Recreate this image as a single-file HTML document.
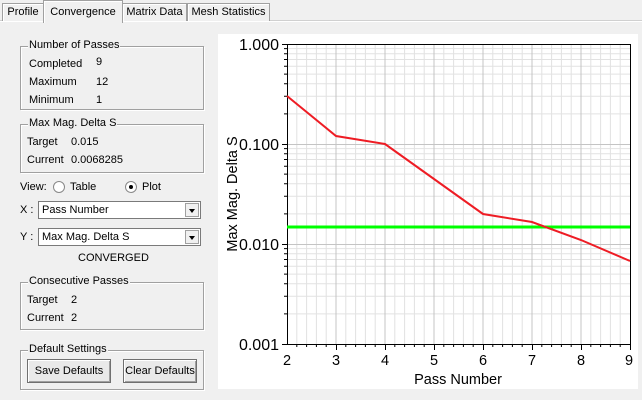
<!DOCTYPE html><html><head><style>
body{margin:0;width:642px;height:400px;background:#f0f0f0;font-family:"Liberation Sans",sans-serif;font-size:11px;color:#000;position:relative;overflow:hidden}
.a{position:absolute;white-space:nowrap}
.tab{position:absolute;top:3px;height:17px;border:1px solid #a0a0a0;border-bottom:none;background:#f0f0f0;text-align:center;line-height:17px;box-shadow:inset 1px 1px 0 #fff}
.g{position:absolute;border:1px solid #a0a0a0;box-shadow:1px 1px 0 #fff, inset 1px 1px 0 #fff}
.gt{position:absolute;top:-8px;left:7px;background:#f0f0f0;padding:0 1px}
.cb{position:absolute;left:38px;width:163px;height:18px;border:1px solid #7a7a7a;background:#fff;box-sizing:border-box}
.cb span{position:absolute;left:3px;top:2px}
.cb i{position:absolute;right:1px;top:1px;width:14px;height:14px;background:#f0f0f0;border:1px solid #a0a0a0;box-sizing:border-box}
.cb i:after{content:"";position:absolute;left:3px;top:5px;border-left:3px solid transparent;border-right:3px solid transparent;border-top:4px solid #000}
.btn{position:absolute;height:24px;border:1px solid #707070;background:#e9e9e9;box-sizing:border-box;text-align:center;line-height:22px;box-shadow:inset 1px 1px 0 #fff,inset -1px -1px 0 #a0a0a0}
</style></head><body>
<div class="a" style="left:0;top:21px;width:642px;height:1px;background:#fff"></div>
<div class="a" style="left:0;top:20px;width:642px;height:1px;background:#d0d0d0"></div>
<div class="tab" style="left:2px;width:40px">Profile</div>
<div class="tab" style="left:122px;width:63px">Matrix Data</div>
<div class="tab" style="left:187px;width:81px">Mesh Statistics</div>
<div class="tab" style="left:43px;top:0;height:22px;width:78px;line-height:22px;">Convergence</div>

<div class="g" style="left:20px;top:46px;width:182px;height:62px"><span class="gt">Number of Passes</span>
<span class="a" style="left:8px;top:11px">Completed</span><span class="a" style="left:75px;top:9px">9</span>
<span class="a" style="left:8px;top:29px">Maximum</span><span class="a" style="left:75px;top:29px">12</span>
<span class="a" style="left:8px;top:47px">Minimum</span><span class="a" style="left:75px;top:47px">1</span></div>

<div class="g" style="left:20px;top:124px;width:182px;height:47px"><span class="gt">Max Mag. Delta S</span>
<span class="a" style="left:6px;top:11px">Target</span><span class="a" style="left:50px;top:11px">0.015</span>
<span class="a" style="left:6px;top:29px">Current</span><span class="a" style="left:50px;top:29px">0.0068285</span></div>

<span class="a" style="left:20px;top:181px">View:</span>
<div class="a" style="left:53px;top:181px;width:10px;height:10px;border-radius:50%;border:1px solid #888;background:#fff"></div>
<span class="a" style="left:70px;top:181px">Table</span>
<div class="a" style="left:125px;top:181px;width:10px;height:10px;border-radius:50%;border:1px solid #888;background:#fff"></div>
<div class="a" style="left:129px;top:185px;width:4px;height:4px;border-radius:50%;background:#000"></div>
<span class="a" style="left:142px;top:181px">Plot</span>

<span class="a" style="left:20px;top:204px">X :</span>
<div class="cb" style="top:201px"><span>Pass Number</span><i></i></div>
<span class="a" style="left:20px;top:231px">Y :</span>
<div class="cb" style="top:228px"><span>Max Mag. Delta S</span><i></i></div>
<span class="a" style="left:78px;top:252px">CONVERGED</span>

<div class="g" style="left:20px;top:282px;width:182px;height:46px"><span class="gt">Consecutive Passes</span>
<span class="a" style="left:6px;top:11px">Target</span><span class="a" style="left:50px;top:11px">2</span>
<span class="a" style="left:6px;top:29px">Current</span><span class="a" style="left:50px;top:29px">2</span></div>

<div class="g" style="left:20px;top:350px;width:182px;height:38px"><span class="gt">Default Settings</span></div>
<div class="btn" style="left:27px;top:359px;width:84px">Save Defaults</div>
<div class="btn" style="left:123px;top:359px;width:74px">Clear Defaults</div>

<svg class="a" style="left:0;top:0" width="642" height="400" font-family="Liberation Sans, sans-serif">
<rect x="218" y="34" width="420" height="355" fill="#fff"/>
<path fill="none" stroke="#e2e2e2" stroke-width="1" d="M296.8 44V344M306.6 44V344M316.4 44V344M326.2 44V344M345.8 44V344M355.6 44V344M365.4 44V344M375.2 44V344M394.8 44V344M404.6 44V344M414.4 44V344M424.2 44V344M443.8 44V344M453.6 44V344M463.4 44V344M473.2 44V344M492.8 44V344M502.6 44V344M512.4 44V344M522.2 44V344M541.8 44V344M551.6 44V344M561.4 44V344M571.2 44V344M590.8 44V344M600.6 44V344M610.4 44V344M620.2 44V344
M287 113.9H630M287 96.3H630M287 83.8H630M287 74.1H630M287 66.2H630M287 59.5H630M287 53.7H630M287 48.6H630
M287 213.9H630M287 196.3H630M287 183.8H630M287 174.1H630M287 166.2H630M287 159.5H630M287 153.7H630M287 148.6H630
M287 313.9H630M287 296.3H630M287 283.8H630M287 274.1H630M287 266.2H630M287 259.5H630M287 253.7H630M287 248.6H630"/>
<path fill="none" stroke="#c4c4c4" d="M336 44V344M385 44V344M434 44V344M483 44V344M532 44V344M581 44V344M287 144.5H630M287 244.5H630"/>
<path fill="none" stroke="#000" stroke-width="1" d="M287.5 344V44.5H630.5V344.5H287
M282 44.5H287M282 144.5H287M282 244.5H287M282 344.5H287
M284 113.9H287M284 96.3H287M284 83.8H287M284 74.1H287M284 66.2H287M284 59.5H287M284 53.7H287M284 48.6H287
M284 213.9H287M284 196.3H287M284 183.8H287M284 174.1H287M284 166.2H287M284 159.5H287M284 153.7H287M284 148.6H287
M284 313.9H287M284 296.3H287M284 283.8H287M284 274.1H287M284 266.2H287M284 259.5H287M284 253.7H287M284 248.6H287
M336.5 344V350M385.5 344V350M434.5 344V350M483.5 344V350M532.5 344V350M581.5 344V350M630.5 344V350
M296.8 344V347M306.6 344V347M316.4 344V347M326.2 344V347M345.8 344V347M355.6 344V347M365.4 344V347M375.2 344V347M394.8 344V347M404.6 344V347M414.4 344V347M424.2 344V347M443.8 344V347M453.6 344V347M463.4 344V347M473.2 344V347M492.8 344V347M502.6 344V347M512.4 344V347M522.2 344V347M541.8 344V347M551.6 344V347M561.4 344V347M571.2 344V347M590.8 344V347M600.6 344V347M610.4 344V347M620.2 344V347"/>
<line x1="287" y1="227" x2="630" y2="227" stroke="#00ff00" stroke-width="3"/>
<polyline fill="none" stroke="#ee1c24" stroke-width="2" points="287,96 336,136 385,144 434,179 483,214 532,222 581,240 630,261"/>
<g font-size="16" fill="#000" text-anchor="end">
<text x="279" y="50">1.000</text><text x="279" y="150">0.100</text><text x="279" y="250">0.010</text><text x="279" y="350">0.001</text></g>
<g font-size="14.5" fill="#000" text-anchor="middle">
<text x="287" y="365">2</text><text x="336" y="365">3</text><text x="385" y="365">4</text><text x="434" y="365">5</text><text x="483" y="365">6</text><text x="532" y="365">7</text><text x="581" y="365">8</text><text x="629" y="365">9</text>
<text x="458" y="384">Pass Number</text>
<text transform="translate(237,194) rotate(-90)">Max Mag. Delta S</text></g>
</svg>
</body></html>
